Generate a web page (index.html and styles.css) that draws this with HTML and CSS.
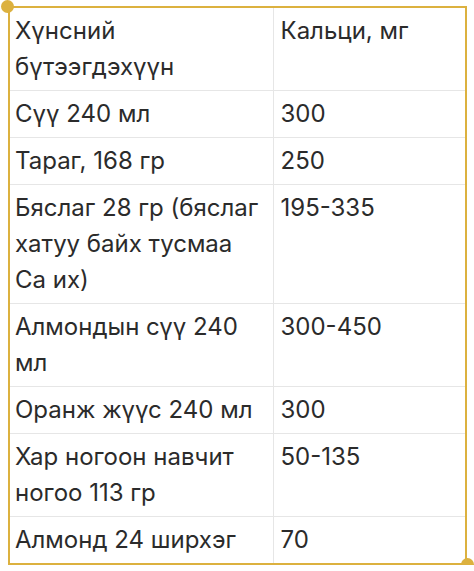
FILE: index.html
```html
<!DOCTYPE html>
<html lang="mn">
<head>
<meta charset="utf-8">
<title>Кальци</title>
<link rel="stylesheet" href="styles.css">
</head>
<body>
<div class="sel">
  <span class="handle handle-tl"></span>
  <table class="tbl">
    <tr><td class="c1">Хүнсний бүтээгдэхүүн</td><td class="c2">Кальци, мг</td></tr>
    <tr><td class="c1">Сүү 240 мл</td><td class="c2">300</td></tr>
    <tr><td class="c1">Тараг, 168 гр</td><td class="c2">250</td></tr>
    <tr><td class="c1">Бяслаг 28 гр (бяслаг хатуу байх тусмаа Са их)</td><td class="c2">195-335</td></tr>
    <tr><td class="c1">Алмондын сүү 240 мл</td><td class="c2">300-450</td></tr>
    <tr><td class="c1">Оранж жүүс 240 мл</td><td class="c2">300</td></tr>
    <tr><td class="c1">Хар ногоон навчит ногоо 113 гр</td><td class="c2">50-135</td></tr>
    <tr><td class="c1">Алмонд 24 ширхэг</td><td class="c2">70</td></tr>
  </table>
  <span class="handle handle-br"></span>
</div>
</body>
</html>
```
FILE: styles.css
```css
html, body {
  margin: 0;
  padding: 0;
  background: #ffffff;
}
body {
  padding: 6px 0 0 8px;
  font-family: Inter, "Noto Sans", sans-serif;
  color: #2b2b2b;
}
.sel {
  position: relative;
  width: 455px;
  border: 2px solid #dcb13f;
}
.tbl {
  width: 100%;
  border-collapse: collapse;
  font-size: 24px;
  line-height: 36px;
}
.tbl td {
  vertical-align: top;
  padding: 5px 6px 5px 5px;
  border-top: 1px solid #e6e6e6;
  text-align: left;
}
.tbl tr:first-child td {
  border-top: none;
}
.c1 {
  width: 263px;
  box-sizing: border-box;
  border-right: 1px solid #e6e6e6;
}
.c2 {
  padding-left: 7px !important;
}
.handle {
  position: absolute;
  width: 13px;
  height: 13px;
  border-radius: 50%;
  background: #dcb13f;
}
.handle-tl {
  left: -9px;
  top: -8px;
}
.handle-br {
  right: -9px;
  bottom: -8px;
}
```
